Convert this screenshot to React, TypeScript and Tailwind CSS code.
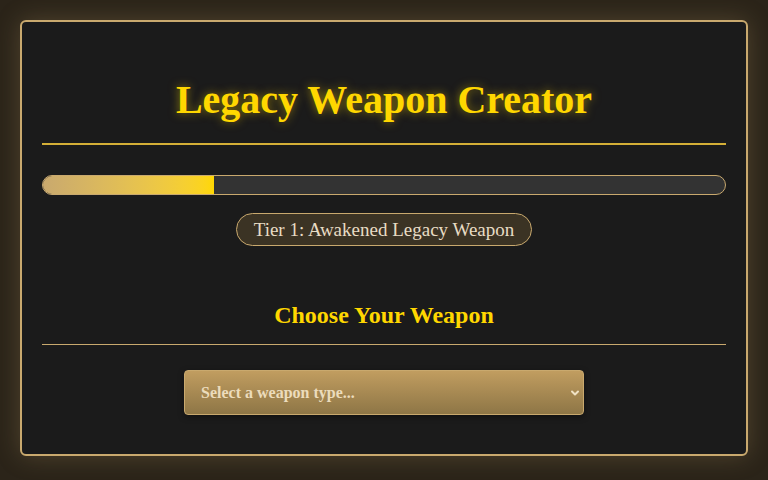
export default function App() {
  const progress = 25

  return (
    <div
      className="min-h-[480px] bg-[#2b2419] p-5"
      style={{ fontFamily: '"Liberation Serif", "Times New Roman", serif' }}
    >
      <div className="h-[436px] rounded-md border-2 border-[#c9a96e] bg-[#1b1b1b] px-5 shadow-[0_0_24px_rgba(201,169,110,0.25)]">
        <header className="border-b-2 border-[#d4af37] pt-[55px] pb-[20px]">
          <h1 className="text-center text-[40px] font-bold leading-[46px] text-[#ffd700] [text-shadow:0_0_10px_rgba(255,215,0,0.5)]">
            Legacy Weapon Creator
          </h1>
        </header>

        <div className="mt-[30px] h-5 overflow-hidden rounded-full border border-[#c9a96e] bg-[#333333]">
          <div
            className="h-full bg-gradient-to-r from-[#c9a96e] to-[#ffd700]"
            style={{ width: `${progress}%` }}
          />
        </div>

        <div className="mt-[18px] flex justify-center">
          <span className="rounded-full border border-[#c9a96e] bg-[#3b3324] px-[17px] py-[4px] text-[19px] leading-[23px] text-[#e8dcc4]">
            Tier 1: Awakened Legacy Weapon
          </span>
        </div>

        <h2 className="mt-[55px] border-b border-[#c9a96e] pb-[15px] text-center text-[24px] font-bold leading-[28px] text-[#ffd700]">
          Choose Your Weapon
        </h2>

        <div className="mt-[25px] flex justify-center">
          <div className="relative w-[400px]">
            <select
              defaultValue=""
              className="h-[45px] w-full appearance-none rounded border border-[#c9a96e] bg-gradient-to-b from-[#c19d60] to-[#8e7646] px-4 text-[16px] font-bold text-[#ecdcbc] shadow-[0_2px_6px_rgba(0,0,0,0.4)]"
              style={{ fontFamily: '"Liberation Serif", "Times New Roman", serif' }}
            >
              <option value="" disabled>
                Select a weapon type...
              </option>
              <option value="sword">Sword</option>
              <option value="axe">Axe</option>
              <option value="bow">Bow</option>
            </select>
            <svg
              className="pointer-events-none absolute right-[3px] top-1/2 -translate-y-1/2"
              width="12"
              height="12"
              viewBox="0 0 12 12"
              fill="none"
              stroke="#f0e2c4"
              strokeWidth="2"
              strokeLinecap="round"
              strokeLinejoin="round"
            >
              <path d="M3 4.5 6 7.5 9 4.5" />
            </svg>
          </div>
        </div>
      </div>
    </div>
  )
}
